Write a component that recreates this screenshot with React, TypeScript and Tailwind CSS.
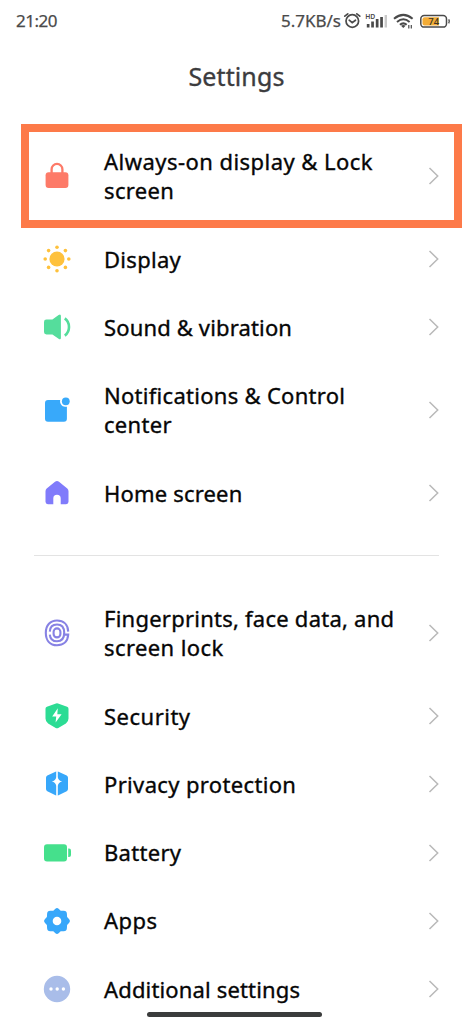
import type { ReactNode } from 'react';

type Row = { lines: { text: string; track: string }[]; icon: ReactNode };

const LockIcon = () => (
  <svg width="28" height="28" viewBox="0 0 28 28" fill="none">
    <path d="M8.600 12V7.400a5.400 5.400 0 0 1 10.800 0V12" transform="translate(0 -.1)" stroke="#fd7a68" strokeWidth="2.300" />
    <rect x="2.600" y="10.200" width="22.800" height="15.800" rx="3" fill="#fd7a68" />
  </svg>
);

const SunIcon = () => (
  <svg width="28" height="28" viewBox="0 0 28 28" fill="#fec13c">
    <circle cx="14" cy="14" r="7.600" />
    <circle cx="14" cy="2.200" r="1.800" />
    <circle cx="14" cy="25.800" r="1.800" />
    <circle cx="2.200" cy="14" r="1.800" />
    <circle cx="25.800" cy="14" r="1.800" />
    <circle cx="5.600" cy="5.600" r="1.800" />
    <circle cx="22.400" cy="5.600" r="1.800" />
    <circle cx="5.600" cy="22.400" r="1.800" />
    <circle cx="22.400" cy="22.400" r="1.800" />
  </svg>
);

const SoundIcon = () => (
  <svg width="28" height="28" viewBox="0 0 28 28" fill="#55dd9c">
    <path d="M3.400 6.600H9.400L15.600 2Q17.900 .6 17.900 3V24.800Q17.900 27.200 15.600 25.800L9.400 21.400H3.400Q1 21.400 1 19V9Q1 6.600 3.400 6.600Z" />
    <path d="M21.800 5.400Q26 8.500 26 14T21.800 22.600" fill="none" stroke="#55dd9c" strokeWidth="2.600" />
  </svg>
);

const NotificationIcon = () => (
  <svg width="28" height="28" viewBox="0 0 28 28" fill="#38a9fa">
    <path d="M5 3.900H17.200A5.600 5.600 0 0 0 23.900 10.700V22.800A3 3 0 0 1 20.900 25.800H5A3 3 0 0 1 2 22.800V6.900A3 3 0 0 1 5 3.900Z" />
    <circle cx="22.800" cy="5.300" r="3.900" />
  </svg>
);

const HomeIcon = () => (
  <svg width="28" height="28" viewBox="0 0 28 28">
    <path d="M12 2.800Q14 1.200 16 2.800L24.300 9.600Q25.500 10.600 25.500 12.200V22.800Q25.500 25.200 23.100 25.200H17.700V19.400A3.700 3.700 0 0 0 10.300 19.400V25.200H4.900Q2.500 25.200 2.500 22.800V12.200Q2.500 10.600 3.700 9.600Z" fill="#807bfb" />
  </svg>
);

const FingerprintIcon = () => (
  <svg width="28" height="28" viewBox="0 0 28 28" fill="none" stroke="#8782e4" strokeWidth="2.100">
    <path d="M25.200 12.600C25 5.600 20.600 1.500 14 1.500S2.800 6 2.800 13.800S7.200 26.200 14 26.200C20.300 26.200 24.800 22.500 25.200 15.600H21" />
    <path d="M6.800 12.600C7 8 9.600 5.500 14 5.500S21.200 8 21.200 13.800S18.600 22.300 14 22.300C9.900 22.300 7.200 20 6.800 15.600" />
    <rect x="10.600" y="9.400" width="6.800" height="9" rx="3.400" />
  </svg>
);

const ShieldIcon = () => (
  <svg width="28" height="28" viewBox="0 0 28 28">
    <path d="M13 1.400Q14 1 15 1.400L24.100 4.700Q25.500 5.200 25.500 6.700V16.500Q25.500 19.500 22.900 21.600L15.300 25.900Q14 26.600 12.700 25.900L5.100 21.600Q2.500 19.500 2.500 16.500V6.700Q2.500 5.200 3.900 4.700Z" fill="#2cdc94" />
    <path d="M14.800 6.200L9.200 14.600H13.200L12.600 20.600L18.600 12.200H14.300Z" fill="#fff" />
  </svg>
);

const PrivacyIcon = () => (
  <svg width="28" height="28" viewBox="0 0 28 28">
    <path d="M12.500 1.700Q14 1 15.500 1.700L23.700 5.500Q25 6.300 25 7.700V19.100Q25 20.500 23.700 21.300L15.500 25.300Q14 26 12.500 25.300L4.300 21.300Q3 20.500 3 19.100V7.700Q3 6.300 4.300 5.500Z" fill="#37a7fa" />
    <path d="M13.200 .5H14.800V7.200Q15.300 10.600 19.200 11.500Q15.300 12.400 14.800 15.800V26.500H13.200V15.800Q12.700 12.400 8.800 11.500Q12.700 10.600 13.200 7.200Z" fill="#fff" />
  </svg>
);

const BatteryIcon = () => (
  <svg width="28" height="28" viewBox="0 0 28 28" fill="#45e08c">
    <rect x="1" y="5.200" width="23" height="17.200" rx="3" />
    <path d="M25.200 9.600H26Q28 9.600 28 11.600V16Q28 18 26 18H25.200Z" />
  </svg>
);

const GearIcon = () => (
  <svg width="28" height="28" viewBox="0 0 28 28">
    <path d="M12.400 1.800Q14 .2 15.600 1.800L17.700 3.800L20.700 3.700Q23.800 3.700 23.900 6.700L24.100 10L26.200 12.200Q27.800 14 26.200 15.800L24.100 18L23.900 21.300Q23.800 24.200 20.700 24.300L17.700 24.200L15.600 26.200Q14 27.800 12.400 26.200L10.300 24.200L7.300 24.300Q4.200 24.200 4.100 21.300L3.900 18L1.800 15.800Q.2 14 1.800 12.200L3.900 10L4.100 6.700Q4.200 3.700 7.300 3.700L10.300 3.800Z" fill="#37a7fa" />
    <circle cx="14" cy="14" r="4.300" fill="#fff" />
  </svg>
);

const MoreIcon = () => (
  <svg width="28" height="28" viewBox="0 0 28 28">
    <circle cx="14" cy="14" r="13.200" fill="#a9bde9" />
    <circle cx="8" cy="14" r="1.700" fill="#fff" />
    <circle cx="14.200" cy="14" r="1.700" fill="#fff" />
    <circle cx="20.400" cy="14" r="1.700" fill="#fff" />
  </svg>
);

const Chevron = () => (
  <svg width="12" height="20" viewBox="0 0 12 20" fill="none" className="shrink-0">
    <path d="M1.500 2L9.700 10L1.500 18" stroke="#b9b9b9" strokeWidth="1.500" />
  </svg>
);

const general: Row[] = [
  { icon: <LockIcon />, lines: [{ text: 'Always-on display & Lock', track: 'tracking-[0.460px]' }, { text: 'screen', track: 'tracking-[0.350px]' }] },
  { icon: <SunIcon />, lines: [{ text: 'Display', track: 'tracking-[0.300px]' }] },
  { icon: <SoundIcon />, lines: [{ text: 'Sound & vibration', track: 'tracking-[0.150px]' }] },
  { icon: <NotificationIcon />, lines: [{ text: 'Notifications & Control', track: 'tracking-[0.280px]' }, { text: 'center', track: 'tracking-[0.300px]' }] },
  { icon: <HomeIcon />, lines: [{ text: 'Home screen', track: 'tracking-[0.180px]' }] },
];

const device: Row[] = [
  { icon: <FingerprintIcon />, lines: [{ text: 'Fingerprints, face data, and', track: 'tracking-[0.240px]' }, { text: 'screen lock', track: 'tracking-[0.400px]' }] },
  { icon: <ShieldIcon />, lines: [{ text: 'Security', track: 'tracking-[0.500px]' }] },
  { icon: <PrivacyIcon />, lines: [{ text: 'Privacy protection', track: 'tracking-[0.350px]' }] },
  { icon: <BatteryIcon />, lines: [{ text: 'Battery', track: 'tracking-[0.300px]' }] },
  { icon: <GearIcon />, lines: [{ text: 'Apps', track: 'tracking-[0.500px]' }] },
  { icon: <MoreIcon />, lines: [{ text: 'Additional settings', track: 'tracking-[0.150px]' }] },
];

const SettingsRow = ({ row }: { row: Row }) => (
  <li className="flex items-center py-[19.650px] pl-[43px] pr-[33px]">
    <span className="mr-[33px] shrink-0">{row.icon}</span>
    <span className="flex flex-1 flex-col items-start whitespace-nowrap text-[22px] leading-[29px] text-[#060606] [-webkit-text-stroke:0.350px_#060606]">
      {row.lines.map((line) => (
        <span key={line.text} className={line.track}>{line.text}</span>
      ))}
    </span>
    <Chevron />
  </li>
);

const StatusBar = () => (
  <header className="flex h-[42px] items-center justify-between pl-4 pr-[20px] text-[17px] text-[#4a4a4a]">
    <span className="tracking-[-0.500px] [-webkit-text-stroke:0.250px_#4a4a4a]">21:20</span>
    <div className="flex items-center">
      <span className="[-webkit-text-stroke:0.250px_#4a4a4a]">5.7KB/s</span>
      <svg width="112" height="24" viewBox="342 9 112 24" fill="none">
        <g stroke="#4a4a4a" strokeWidth="1.700" strokeLinecap="round">
          <circle cx="353.300" cy="21" r="6.300" />
          <path d="M350.200 20.200L353.200 22.700L356.500 20.200M345.800 16.200L348.800 13.800M357.800 13.800L360.800 16.200" />
        </g>
        <text x="366.200" y="18.600" fontSize="6.800" fontWeight="600" fill="#4a4a4a">HD</text>
        <g fill="#4a4a4a">
          <rect x="367.800" y="24" width="2.700" height="3.500" />
          <rect x="372.200" y="21.500" width="2.700" height="6" />
          <rect x="376.800" y="19" width="2.700" height="8.500" />
          <rect x="381.200" y="17" width="2.700" height="10.500" />
          <rect x="385.600" y="15" width="2.400" height="12.500" fill="#c9c9c9" />
        </g>
        <g stroke="#4a4a4a" strokeWidth="2">
          <path d="M395 18.800Q404.300 11 413.600 18.800M398 21.900Q404.300 16.600 410.600 21.900M400.900 24.800Q404.300 22 407.700 24.800" />
        </g>
        <path d="M402 25.800Q404.300 24 406.600 25.800L404.300 28Z" fill="#4a4a4a" />
        <path d="M409.800 25V28.500M412.300 25V28.500" stroke="#4a4a4a" strokeWidth="1.200" />
        <rect x="421.800" y="15.500" width="25.700" height="11.600" rx="3.400" fill="#fff" stroke="#4a4a4a" strokeWidth="1.500" />
        <path d="M425.500 17.200H440V25.400H425.500Q423.500 25.400 423.500 23.400V19.200Q423.500 17.200 425.500 17.200Z" fill="#f3ac35" />
        <path d="M449.700 19.300Q451 21.200 449.700 23.300" stroke="#4a4a4a" strokeWidth="1.400" />
        <text x="429.300" y="24.700" fontSize="9.500" fontWeight="500" fill="#3c3525">74</text>
      </svg>
    </div>
  </header>
);

export default function App() {
  return (
    <main className="relative flex h-[1024px] w-[473px] flex-col overflow-hidden bg-white font-['Noto_Sans',sans-serif]">
      <StatusBar />
      <h1 className="flex h-[85.750px] items-start justify-center pt-[16px] text-[25px] leading-[36px] tracking-[0.100px] text-[#3c3c3e] [-webkit-text-stroke:0.350px_#3c3c3e]">
        Settings
      </h1>
      <ul>
        {general.map((row) => <SettingsRow key={row.lines[0].text} row={row} />)}
      </ul>
      <hr className="mx-[34px] mb-[28.750px] mt-[27.750px] border-t border-[#e3e3e3]" />
      <ul>
        {device.map((row) => <SettingsRow key={row.lines[0].text} row={row} />)}
      </ul>
      <div className="pointer-events-none absolute left-[21px] top-[124px] h-[103.500px] w-[441px] border-[8.500px] border-[#fd7a49]" />
      <div className="absolute left-[147px] top-[1012px] h-[4.500px] w-[175px] rounded-full bg-[#3b3c3c]" />
    </main>
  );
}
